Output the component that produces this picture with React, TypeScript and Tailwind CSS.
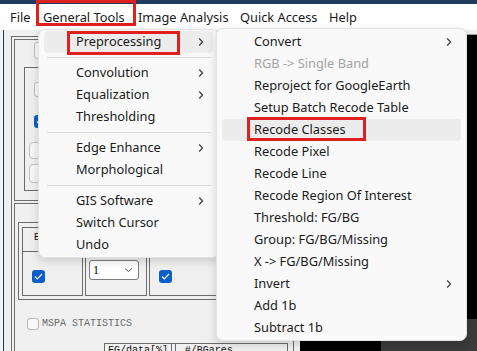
import React from "react";

type Item = { label: string; sub?: boolean; disabled?: boolean; hover?: boolean; boxed?: boolean } | "sep";

const generalTools: Item[] = [
  { label: "Preprocessing", sub: true, hover: true, boxed: true },
  "sep",
  { label: "Convolution", sub: true },
  { label: "Equalization", sub: true },
  { label: "Thresholding" },
  "sep",
  { label: "Edge Enhance", sub: true },
  { label: "Morphological" },
  "sep",
  { label: "GIS Software", sub: true },
  { label: "Switch Cursor" },
  { label: "Undo" },
];

const preprocessing: Item[] = [
  { label: "Convert", sub: true },
  { label: "RGB -> Single Band", disabled: true },
  { label: "Reproject for GoogleEarth" },
  { label: "Setup Batch Recode Table" },
  { label: "Recode Classes", hover: true, boxed: true },
  { label: "Recode Pixel" },
  { label: "Recode Line" },
  { label: "Recode Region Of Interest" },
  { label: "Threshold: FG/BG" },
  { label: "Group: FG/BG/Missing" },
  { label: "X -> FG/BG/Missing" },
  { label: "Invert", sub: true },
  { label: "Add 1b" },
  { label: "Subtract 1b" },
];

function Chevron() {
  return (
    <svg width="6" height="10" viewBox="0 0 6 10" className="ml-auto shrink-0">
      <path d="M1.2 1.5L4.6 5L1.2 8.5" fill="none" stroke="#333" strokeWidth="1.1" />
    </svg>
  );
}

function MenuList({ items, box }: { items: Item[]; box: string }) {
  return (
    <>
      {items.map((it, i) =>
        it === "sep" ? (
          <div key={i} className="h-[9px] flex items-center ml-[8px] mr-[7px]">
            <div className="h-px w-full bg-[#dcdcdc]" />
          </div>
        ) : (
          <div
            key={i}
            className={
              "relative flex items-center h-[22px] mx-[5px] rounded-[4px] pr-[9px] " +
              (it.hover ? "bg-[#ececec] " : "") +
              (it.disabled ? "text-[#a3a3a3]" : "text-[#1a1a1a]")
            }
          >
            <span className="pl-[32px] whitespace-nowrap">{it.label}</span>
            {it.sub && <Chevron />}
            {it.boxed && <div className={"absolute border-[3px] border-[#e21f1f] " + box} />}
          </div>
        )
      )}
    </>
  );
}

function Check({ on }: { on?: boolean }) {
  return on ? (
    <div className="w-[13px] h-[13px] rounded-[3px] bg-[#0c5fc9] flex items-center justify-center">
      <svg width="9" height="7" viewBox="0 0 9 7">
        <path d="M1 3.6L3.3 5.8L8 1" fill="none" stroke="#fff" strokeWidth="1.2" />
      </svg>
    </div>
  ) : (
    <div className="w-[12px] h-[12px] rounded-[3px] border border-[#b5b5b5] bg-[#f7f7f7]" />
  );
}

export default function App() {
  return (
    <div
      className="relative w-[477px] h-[351px] overflow-hidden bg-white"
      style={{ fontFamily: '"Noto Sans", "Noto Sans CJK SC", sans-serif' }}
    >
      <div className="h-[4px] bg-[#1e3a5f]" />
      {/* menubar */}
      <div className="relative h-[26px] bg-white flex items-center text-[12.8px] text-[#1a1a1a] pl-[4px] pt-[1px]">
        <span className="w-[32px] pl-[6px]">File</span>
        <span className="relative w-[100px] pl-[7px]">
          General Tools
          <div className="absolute left-0 top-[-8px] w-[100px] h-[26px] border-[3px] border-[#e21f1f]" />
        </span>
        <span className="w-[101px] pl-[2px]">Image Analysis</span>
        <span className="w-[89px] pl-[3px]">Quick Access</span>
        <span className="pl-[3px]">Help</span>
      </div>

      {/* application body */}
      <div className="flex h-[321px]">
        <div className="w-[300px] flex bg-[#f0f0f0]">
          <div className="w-[3px] bg-[#f4f4f4]" />
          <div className="w-px bg-[#1e3a5f]" />
          <div className="flex-1 pl-[7px] pt-[6px]">
            {/* frame A */}
            <div className="w-[283px] h-[320px] border-l border-t border-r border-[#6c6c6c] pl-[2px] pt-[2px]">
              {/* B1 */}
              <div className="w-[270px] h-[162px] border border-[#6c6c6c] pl-[19px] pt-[2px]">
                <div className="w-[70px] h-[17px] rounded-[3px] border border-[#bdbdbd] bg-[#fbfbfb]" />
                <div className="-ml-[10px] mt-[8px] w-[230px] h-[124px] border border-[#6c6c6c] pl-[9px] pt-[14px]">
                  <div className="w-[60px] h-[15px] rounded-[3px] border border-[#bdbdbd] bg-[#fbfbfb]" />
                  <div className="mt-[18px]">
                    <Check on />
                  </div>
                  <div className="-ml-[5px] mt-[14px] w-[60px] h-[17px] rounded-[4px] border border-[#c4c4c4] bg-[#f7f7f7]" />
                  <div className="-ml-[5px] mt-[5px] w-[60px] h-[19px] rounded-[4px] border border-[#c4c4c4] bg-[#f7f7f7]" />
                </div>
              </div>
              {/* B2 */}
              <div className="mt-[2px] w-[270px] h-[160px] border-l border-t border-[#6c6c6c] pl-[3px] pt-[18px]">
                <div className="w-[250px] border border-[#6c6c6c] pl-[3px] pt-[4px] pb-[3px]">
                  <div className="border-l border-t border-[#6c6c6c]">
                    <div
                      className="h-[23px] pl-[11px] pt-[2px] text-[10px] text-[#111]"
                      style={{ fontFamily: '"Liberation Mono", monospace' }}
                    >
                      E
                    </div>
                    <div className="flex gap-[2px] -ml-px">
                      <div className="w-[61px] h-[45px] border border-[#6c6c6c] pl-[9px] pt-[18px]">
                        <Check on />
                      </div>
                      <div className="w-[62px] h-[45px] border border-[#6c6c6c] pl-[3px] pt-[8px]">
                        <div
                          className="w-[50px] h-[20px] rounded-[3px] border border-[#7c7c7c] bg-white flex items-center pl-[3px] pr-[5px] text-[12px]"
                          style={{ fontFamily: '"Liberation Serif", serif' }}
                        >
                          1
                          <svg width="9" height="6" viewBox="0 0 9 6" className="ml-auto">
                            <path d="M1 1.5L4.5 4.5L8 1.5" fill="none" stroke="#555" strokeWidth="1" />
                          </svg>
                        </div>
                      </div>
                      <div className="w-[90px] h-[45px] border border-[#6c6c6c] pl-[9px] pt-[18px]">
                        <Check on />
                      </div>
                    </div>
                  </div>
                </div>
                <div className="flex items-center gap-[3px] ml-[9px] mt-[16px]">
                  <Check />
                  <span
                    className="text-[10px] text-[#6a6a6a]"
                    style={{ fontFamily: '"Liberation Mono", monospace' }}
                  >
                    MSPA STATISTICS
                  </span>
                </div>
                <div
                  className="ml-[86px] mt-[12px] flex text-[10px] leading-[14px] text-[#111] border-l border-t border-[#6c6c6c] w-[184px]"
                  style={{ fontFamily: '"Liberation Mono", monospace' }}
                >
                  <div className="w-[68px] pl-[3px] border-r border-[#6c6c6c]">FG/data[%]</div>
                  <div className="w-[115px] pl-[9px] border-l border-r border-[#6c6c6c] ml-[3px]">#/BGares</div>
                </div>
              </div>
            </div>
          </div>
        </div>
        <div className="relative flex-1 bg-black">
          <div className="h-[5px] bg-[#f0f0f0] border-b border-[#9a9a9a]" />
          <div className="absolute left-[81px] top-[289px] right-0 bottom-0 bg-[#3b3b3b]" />
        </div>
      </div>

      {/* General Tools dropdown */}
      <div className="absolute left-[38px] top-[29px] w-[181px] rounded-[7px] border border-[#e3e3e3] bg-[#f9f9f9] pt-[1px] pb-[1px] text-[12.8px] shadow-[0_3px_10px_rgba(0,0,0,0.16)]">
        <MenuList items={generalTools} box="left-[23px] top-0 w-[113px] h-[24px]" />
      </div>

      {/* Preprocessing submenu */}
      <div className="absolute left-[216px] top-[28px] w-[251px] rounded-[7px] border border-[#e3e3e3] bg-[#f9f9f9] pt-[2px] pb-[1px] text-[12.8px] shadow-[0_3px_10px_rgba(0,0,0,0.16)]">
        <MenuList items={preprocessing} box="left-[25px] top-[-2px] w-[119px] h-[24px]" />
      </div>
    </div>
  );
}
